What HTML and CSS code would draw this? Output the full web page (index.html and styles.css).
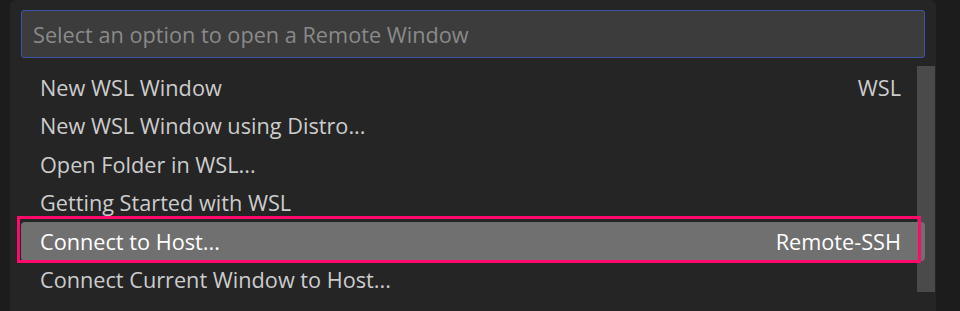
FILE: index.html
```html
<!DOCTYPE html>
<html lang="en">
<head>
  <meta charset="UTF-8" />
  <title>Remote Window</title>
  <link rel="stylesheet" href="styles.css">
</head>
<body>
  <!-- Quick pick panel -->
  <div id="quick-pick">
    <div class="qp-input">
      <input type="text" placeholder="Select an option to open a Remote Window" />
    </div>

    <div class="qp-list">
      <div class="qp-scrollbar"></div>
      <div class="qp-row">
        <span class="label">New WSL Window</span>
        <span class="detail">WSL</span>
      </div>
      <div class="qp-row">
        <span class="label">New WSL Window using Distro...</span>
      </div>
      <div class="qp-row">
        <span class="label">Open Folder in WSL...</span>
      </div>
      <div class="qp-row">
        <span class="label">Getting Started with WSL</span>
      </div>
      <div class="qp-row selected">
        <span class="label">Connect to Host...</span>
        <span class="detail">Remote-SSH</span>
        <!-- annotation box -->
        <span class="callout"></span>
      </div>
      <div class="qp-row">
        <span class="label">Connect Current Window to Host...</span>
      </div>
    </div>
  </div>
</body>
</html>
```

FILE: styles.css
```css
/* Basic reset */
body, html {
  margin: 0;
  padding: 0;
  height: 100%;
}
body {
  background: #1c1c1c;
  font-family: "Open Sans", "Noto Sans", sans-serif;
  overflow: hidden;
}
/* Quick pick panel */
#quick-pick {
  margin-left: 10px;
  width: 926px;
  height: 311px;
  background: #252526;
  border-radius: 6px 6px 0 0;
  padding: 10px 11px 0 11px;
  box-sizing: border-box;
}
/* Filter input */
.qp-input input {
  display: block;
  width: 100%;
  height: 48px;
  box-sizing: border-box;
  background: #3c3c3c;
  border: 1px solid #3d53a8;
  border-radius: 3px;
  padding: 0 11px;
  color: #cccccc;
  font-family: inherit;
  font-size: 21.7px;
  outline: none;
}
.qp-input input::placeholder {
  color: #8a8a8a;
}
/* Result list */
.qp-list {
  position: relative;
  margin-top: 10px;
}
.qp-scrollbar {
  position: absolute;
  top: -2px;
  right: -10px;
  width: 18px;
  height: 226px;
  background: #4a4a4a;
}
.qp-row {
  position: relative;
  display: flex;
  align-items: center;
  justify-content: space-between;
  height: 38.5px;
  padding: 0 24px 0 19px;
  border-radius: 4px;
  color: #cccccc;
  font-size: 21.7px;
}
.qp-row.selected {
  background: #707070;
  color: #ffffff;
}
.callout {
  position: absolute;
  left: -4px;
  right: 4px;
  top: -6px;
  bottom: -2px;
  border: 3px solid #ff0a6c;
}
```
